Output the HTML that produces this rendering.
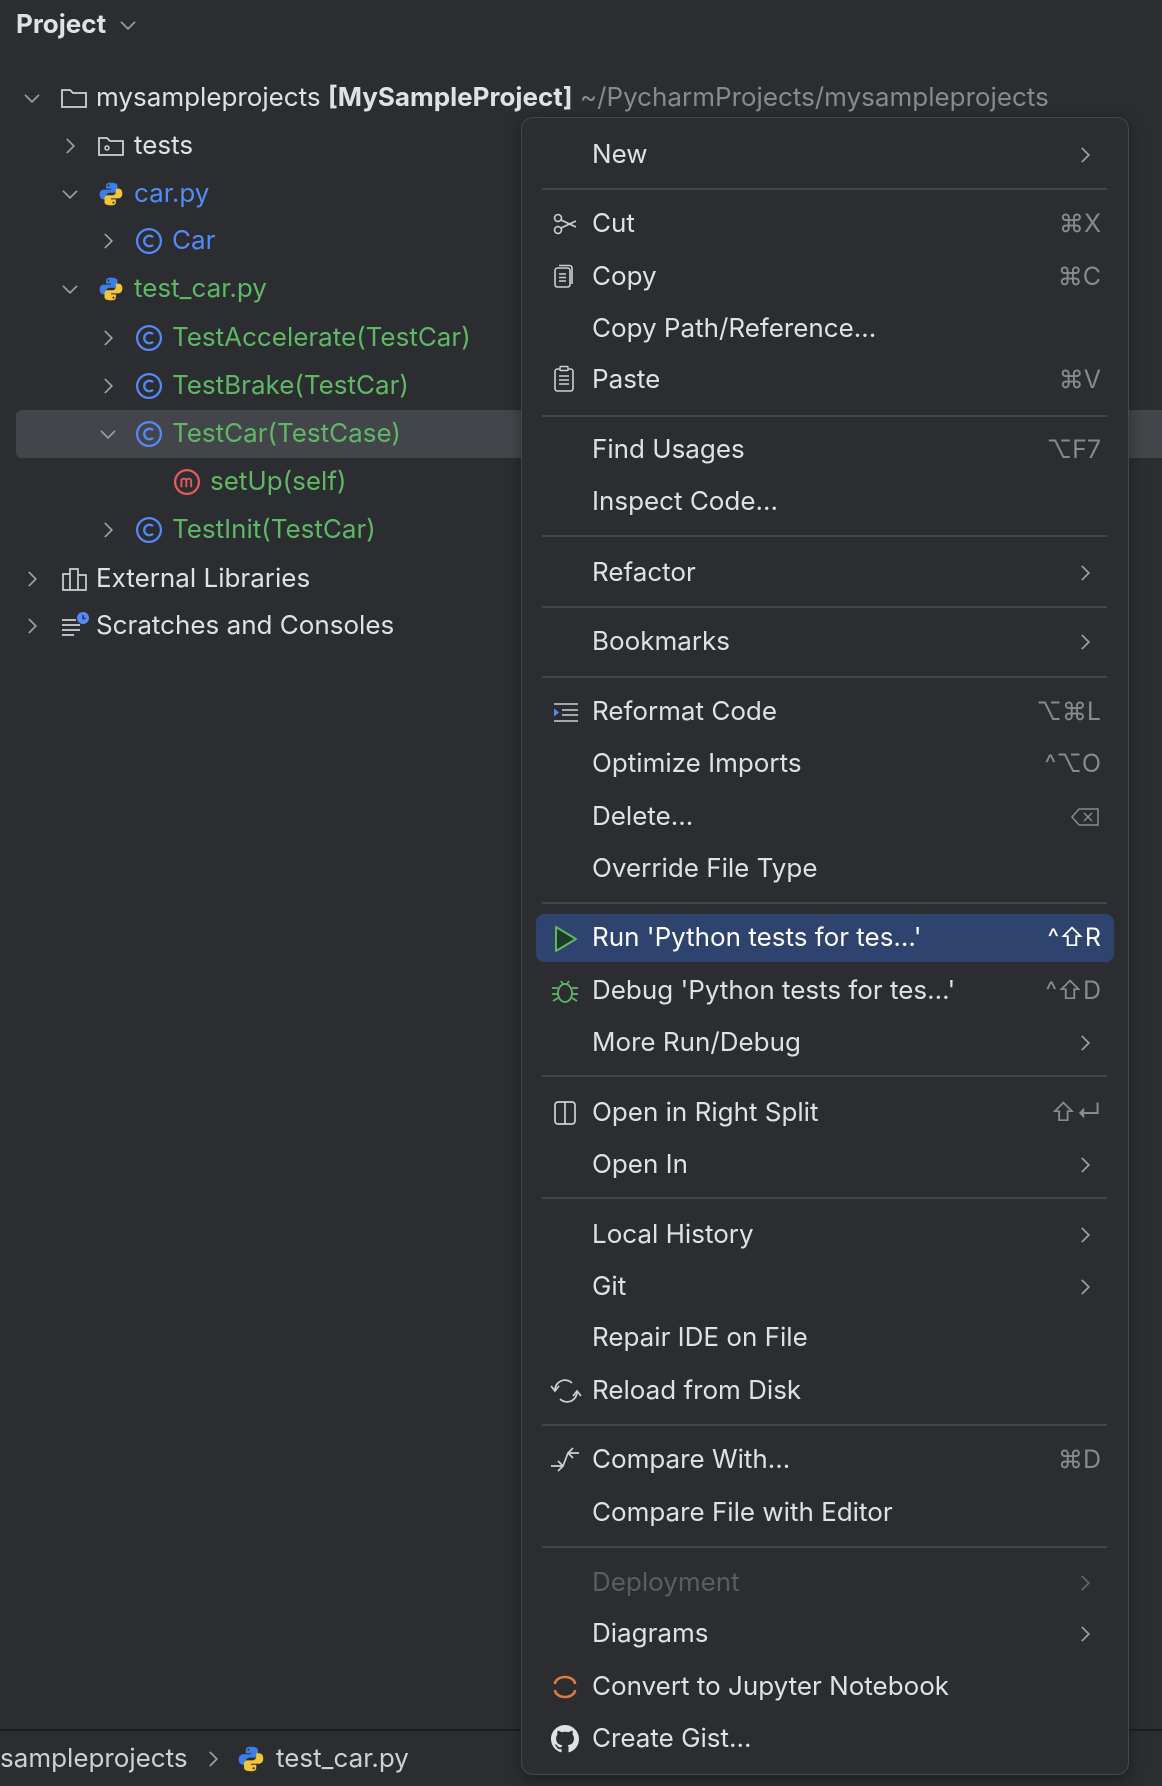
<!DOCTYPE html>
<html><head><meta charset="utf-8">
<style>
*{margin:0;padding:0;box-sizing:border-box}
html,body{width:1162px;height:1786px;background:#2b2d30;overflow:hidden;font-family:"Inter","Liberation Sans",sans-serif;color:#dfe1e5}
.a{position:absolute;white-space:nowrap;height:32px;line-height:32px;font-size:26px}
.ic{position:absolute}
.g{color:#5fb865}.b{color:#548af7}.gr{color:#868a91}
.sep{position:absolute;left:542px;width:565px;height:2px;background:#43454a}
.sc{position:absolute;right:61px;color:#868a91;font-size:25px;height:32px;line-height:32px;text-align:right}
.ch{position:absolute;left:1076px}
</style></head><body>
<svg width="0" height="0" style="position:absolute">
<defs>
<symbol id="cr" viewBox="0 0 14 14"><path d="M4.5 1.5l5.5 5.5-5.5 5.5" fill="none" stroke="#9da0a8" stroke-width="1.3"/></symbol>
<symbol id="cd" viewBox="0 0 14 14"><path d="M1.5 4.5l5.5 5.5 5.5-5.5" fill="none" stroke="#9da0a8" stroke-width="1.3"/></symbol>
<symbol id="cls" viewBox="0 0 16 16"><circle cx="8" cy="8" r="6.8" fill="none" stroke="#548af7" stroke-width="1.3"/><path d="M10.3 5.8A3 3 0 1 0 10.3 10.2" fill="none" stroke="#548af7" stroke-width="1.3"/></symbol>
<symbol id="py" viewBox="0 0 16 16"><path d="M7.8 1C5 1 5 2.3 5 3v1.7h3v.6H3.6C2.2 5.3 1 6.3 1 8.3s1.1 3 2.4 3H5V9.4c0-1.2 1-2.2 2.2-2.2h2.9c1 0 1.9-.8 1.9-1.9V3c0-1-.9-2-4.2-2z" fill="#3d7ee8"/><circle cx="6.5" cy="2.7" r=".6" fill="#2b2d30"/><path d="M8.2 15c2.8 0 2.8-1.3 2.8-2v-1.7H8v-.6h4.4c1.4 0 2.6-1 2.6-3s-1.1-3-2.4-3H11v1.9c0 1.2-1 2.2-2.2 2.2H5.9c-1 0-1.9.8-1.9 1.9V13c0 1 .9 2 4.2 2z" fill="#f2c53d"/><circle cx="9.5" cy="13.3" r=".6" fill="#2b2d30"/></symbol>
</defs></svg>

<!-- Header -->
<div class="a" style="left:16px;top:9px;font-weight:bold;font-size:26px">Project</div>
<svg class="ic" style="left:119px;top:16px" width="18" height="18"><use href="#cd"/></svg>

<!-- selected row -->
<div style="position:absolute;left:16px;top:410px;width:1146px;height:48px;background:#43454a;border-radius:6px 0 0 6px"></div>

<!-- tree -->
<svg class="ic" style="left:23px;top:89px" width="18" height="18"><use href="#cd"/></svg>
<svg class="ic" style="left:60px;top:86px" width="28" height="24" viewBox="0 0 28 24"><path d="M2 4h8l3 3h13v14H2z" fill="none" stroke="#ced0d6" stroke-width="1.8"/></svg>
<div class="a" style="left:96px;top:82px">mysampleprojects <b>[MySampleProject]</b> <span class="gr">~/PycharmProjects/mysampleprojects</span></div>

<svg class="ic" style="left:61px;top:137px" width="18" height="18"><use href="#cr"/></svg>
<svg class="ic" style="left:97px;top:134px" width="28" height="24" viewBox="0 0 28 24"><path d="M2 4h8l3 3h13v14H2z" fill="none" stroke="#ced0d6" stroke-width="1.8"/><circle cx="10" cy="14" r="2" fill="none" stroke="#ced0d6" stroke-width="1.5"/></svg>
<div class="a" style="left:134px;top:130px">tests</div>

<svg class="ic" style="left:61px;top:185px" width="18" height="18"><use href="#cd"/></svg>
<svg class="ic" style="left:98px;top:181px" width="26" height="26"><use href="#py"/></svg>
<div class="a b" style="left:134px;top:178px">car.py</div>

<svg class="ic" style="left:99px;top:232px" width="18" height="18"><use href="#cr"/></svg>
<svg class="ic" style="left:135px;top:227px" width="28" height="28"><use href="#cls"/></svg>
<div class="a b" style="left:172px;top:225px">Car</div>

<svg class="ic" style="left:61px;top:280px" width="18" height="18"><use href="#cd"/></svg>
<svg class="ic" style="left:98px;top:276px" width="26" height="26"><use href="#py"/></svg>
<div class="a g" style="left:134px;top:273px">test_car.py</div>

<svg class="ic" style="left:99px;top:329px" width="18" height="18"><use href="#cr"/></svg>
<svg class="ic" style="left:135px;top:324px" width="28" height="28"><use href="#cls"/></svg>
<div class="a g" style="left:172px;top:322px">TestAccelerate(TestCar)</div>

<svg class="ic" style="left:99px;top:377px" width="18" height="18"><use href="#cr"/></svg>
<svg class="ic" style="left:135px;top:372px" width="28" height="28"><use href="#cls"/></svg>
<div class="a g" style="left:172px;top:370px">TestBrake(TestCar)</div>

<svg class="ic" style="left:99px;top:425px" width="18" height="18"><use href="#cd"/></svg>
<svg class="ic" style="left:135px;top:420px" width="28" height="28"><use href="#cls"/></svg>
<div class="a g" style="left:172px;top:418px">TestCar(TestCase)</div>

<svg class="ic" style="left:173px;top:468px" width="28" height="28" viewBox="0 0 16 16"><circle cx="8" cy="8" r="6.8" fill="none" stroke="#e55a5a" stroke-width="1.3"/><path d="M4.8 11V6.3M4.8 7.5c0-1 .7-1.4 1.4-1.4S7.6 6.5 7.6 7.5V11M7.6 7.5c0-1 .7-1.4 1.4-1.4s1.4.4 1.4 1.4V11" fill="none" stroke="#e55a5a" stroke-width="1.1"/></svg>
<div class="a g" style="left:210px;top:466px">setUp(self)</div>

<svg class="ic" style="left:99px;top:521px" width="18" height="18"><use href="#cr"/></svg>
<svg class="ic" style="left:135px;top:516px" width="28" height="28"><use href="#cls"/></svg>
<div class="a g" style="left:172px;top:514px">TestInit(TestCar)</div>

<svg class="ic" style="left:23px;top:570px" width="18" height="18"><use href="#cr"/></svg>
<svg class="ic" style="left:61px;top:566px" width="28" height="26" viewBox="0 0 28 26"><path d="M2 8h7v16H2zM9 3h8v21H9zM17 9h8v15h-8z" fill="none" stroke="#ced0d6" stroke-width="1.7"/></svg>
<div class="a" style="left:96px;top:563px">External Libraries</div>

<svg class="ic" style="left:23px;top:617px" width="18" height="18"><use href="#cr"/></svg>
<svg class="ic" style="left:60px;top:610px" width="32" height="30" viewBox="0 0 32 30"><path d="M2 10h14M2 15h18M2 20h18M2 25h12" stroke="#ced0d6" stroke-width="1.8"/><circle cx="23" cy="8" r="6" fill="#548af7"/><path d="M23 5v3.5h2.5" stroke="#2b2d30" stroke-width="1.5" fill="none"/></svg>
<div class="a" style="left:96px;top:610px">Scratches and Consoles</div>

<!-- status bar -->
<div style="position:absolute;left:0;top:1729px;width:1162px;height:2px;background:#1e1f22"></div>
<div class="a" style="left:0;top:1743px;color:#ced0d6">sampleprojects</div>
<svg class="ic" style="left:204px;top:1750px" width="18" height="18"><use href="#cr"/></svg>
<svg class="ic" style="left:237px;top:1745px" width="28" height="28"><use href="#py"/></svg>
<div class="a" style="left:276px;top:1743px;color:#ced0d6">test_car.py</div>

<!-- menu -->
<div style="position:absolute;left:521px;top:117px;width:608px;height:1658px;background:#2b2d30;border:1.5px solid #45474c;border-radius:12px;box-shadow:0 4px 14px rgba(0,0,0,.35)"></div>
<div style="position:absolute;left:536px;top:914px;width:578px;height:48px;background:#2e436e;border-radius:8px"></div>

<div class="sep" style="top:188px"></div>
<div class="sep" style="top:415px"></div>
<div class="sep" style="top:535px"></div>
<div class="sep" style="top:606px"></div>
<div class="sep" style="top:676px"></div>
<div class="sep" style="top:902px"></div>
<div class="sep" style="top:1075px"></div>
<div class="sep" style="top:1197px"></div>
<div class="sep" style="top:1424px"></div>
<div class="sep" style="top:1546px"></div>

<div class="a" style="left:592px;top:139px">New</div><svg class="ic ch" style="top:146px" width="18" height="18"><use href="#cr"/></svg>

<svg class="ic" style="left:552px;top:212px" width="26" height="24" viewBox="0 0 26 24"><circle cx="6" cy="6" r="3.5" fill="none" stroke="#ced0d6" stroke-width="1.6"/><circle cx="6" cy="18" r="3.5" fill="none" stroke="#ced0d6" stroke-width="1.6"/><path d="M9 8l15 7M9 16l15-7" stroke="#ced0d6" stroke-width="1.6"/></svg>
<div class="a" style="left:592px;top:208px">Cut</div><div class="sc" style="top:208px">⌘X</div>

<svg class="ic" style="left:553px;top:263px" width="24" height="26" viewBox="0 0 24 26"><rect x="2" y="5" width="15" height="19" rx="2.5" fill="none" stroke="#ced0d6" stroke-width="1.6"/><path d="M6 2.5h10.5A2.5 2.5 0 0 1 19 5v16" fill="none" stroke="#ced0d6" stroke-width="1.6"/><path d="M6 11h7M6 14.5h7M6 18h7" stroke="#ced0d6" stroke-width="1.5"/></svg>
<div class="a" style="left:592px;top:261px">Copy</div><div class="sc" style="top:261px">⌘C</div>

<div class="a" style="left:592px;top:313px">Copy Path/Reference...</div>

<svg class="ic" style="left:553px;top:365px" width="24" height="28" viewBox="0 0 24 28"><rect x="2" y="4" width="18" height="22" rx="2.5" fill="none" stroke="#ced0d6" stroke-width="1.6"/><rect x="7" y="1.5" width="8" height="4" rx="1" fill="#2b2d30" stroke="#ced0d6" stroke-width="1.5"/><path d="M6 11h10M6 15h10M6 19h10" stroke="#ced0d6" stroke-width="1.5"/></svg>
<div class="a" style="left:592px;top:364px">Paste</div><div class="sc" style="top:364px">⌘V</div>

<div class="a" style="left:592px;top:434px">Find Usages</div><div class="sc" style="top:434px">⌥F7</div>
<div class="a" style="left:592px;top:486px">Inspect Code...</div>
<div class="a" style="left:592px;top:557px">Refactor</div><svg class="ic ch" style="top:564px" width="18" height="18"><use href="#cr"/></svg>
<div class="a" style="left:592px;top:626px">Bookmarks</div><svg class="ic ch" style="top:633px" width="18" height="18"><use href="#cr"/></svg>

<svg class="ic" style="left:553px;top:701px" width="26" height="22" viewBox="0 0 26 22"><path d="M1 3h24M9 9h16M9 14h16M1 20h24" stroke="#ced0d6" stroke-width="1.6"/><path d="M1 7.5l5 4-5 4z" fill="#548af7"/></svg>
<div class="a" style="left:592px;top:696px">Reformat Code</div><div class="sc" style="top:696px">⌥⌘L</div>
<div class="a" style="left:592px;top:748px">Optimize Imports</div><div class="sc" style="top:748px">^⌥O</div>
<div class="a" style="left:592px;top:801px">Delete...</div>
<svg class="ic" style="left:1071px;top:807px" width="30" height="20" viewBox="0 0 30 20"><path d="M8 2h19v16H8L1 10z" fill="none" stroke="#868a91" stroke-width="1.5"/><path d="M13 6l8 8M21 6l-8 8" stroke="#868a91" stroke-width="1.5"/></svg>
<div class="a" style="left:592px;top:853px">Override File Type</div>

<svg class="ic" style="left:553px;top:925px" width="26" height="28" viewBox="0 0 26 28"><path d="M3 2l20 12L3 26z" fill="#1f3a26" stroke="#5fb865" stroke-width="2" stroke-linejoin="round"/></svg>
<div class="a" style="left:592px;top:922px;color:#fff">Run 'Python tests for tes...'</div><div class="sc" style="top:922px;color:#fff">^⇧R</div>

<svg class="ic" style="left:550px;top:976px" width="30" height="30" viewBox="0 0 30 30"><ellipse cx="15" cy="17" rx="7" ry="9" fill="none" stroke="#5fb865" stroke-width="1.8"/><path d="M11 5l2 3M19 5l-2 3M2 12h6M22 12h6M2 18h6M22 18h6M3 25l5-3M27 25l-5-3" stroke="#5fb865" stroke-width="1.8"/></svg>
<div class="a" style="left:592px;top:975px">Debug 'Python tests for tes...'</div><div class="sc" style="top:975px">^⇧D</div>

<div class="a" style="left:592px;top:1027px">More Run/Debug</div><svg class="ic ch" style="top:1034px" width="18" height="18"><use href="#cr"/></svg>

<svg class="ic" style="left:553px;top:1100px" width="24" height="26" viewBox="0 0 24 26"><rect x="2" y="2" width="20" height="22" rx="3" fill="none" stroke="#ced0d6" stroke-width="1.7"/><path d="M12 2v22" stroke="#ced0d6" stroke-width="1.7"/></svg>
<div class="a" style="left:592px;top:1097px">Open in Right Split</div><div class="sc" style="top:1097px">⇧↵</div>
<div class="a" style="left:592px;top:1149px">Open In</div><svg class="ic ch" style="top:1156px" width="18" height="18"><use href="#cr"/></svg>

<div class="a" style="left:592px;top:1219px">Local History</div><svg class="ic ch" style="top:1226px" width="18" height="18"><use href="#cr"/></svg>
<div class="a" style="left:592px;top:1271px">Git</div><svg class="ic ch" style="top:1278px" width="18" height="18"><use href="#cr"/></svg>
<div class="a" style="left:592px;top:1322px">Repair IDE on File</div>

<svg class="ic" style="left:550px;top:1377px" width="32" height="28" viewBox="0 0 32 28"><path d="M5 13A10 10 0 0 1 22 6M27 15A10 10 0 0 1 10 22" fill="none" stroke="#ced0d6" stroke-width="1.7"/><path d="M1 9l4 5 4-5M31 19l-4-5-4 5" fill="none" stroke="#ced0d6" stroke-width="1.7"/></svg>
<div class="a" style="left:592px;top:1375px">Reload from Disk</div>

<svg class="ic" style="left:549px;top:1444px" width="34" height="32" viewBox="0 0 34 32"><path d="M30 9H20M24 4l-5 5 5 5M2 22h12M9 17l5 5-5 5M19 9l-5 13" fill="none" stroke="#ced0d6" stroke-width="1.7"/></svg>
<div class="a" style="left:592px;top:1444px">Compare With...</div><div class="sc" style="top:1444px">⌘D</div>
<div class="a" style="left:592px;top:1497px">Compare File with Editor</div>

<div class="a" style="left:592px;top:1567px;color:#5a5d63">Deployment</div><svg class="ic ch" style="top:1574px;opacity:.5" width="18" height="18"><use href="#cr"/></svg>
<div class="a" style="left:592px;top:1618px">Diagrams</div><svg class="ic ch" style="top:1625px" width="18" height="18"><use href="#cr"/></svg>

<svg class="ic" style="left:551px;top:1673px" width="28" height="28" viewBox="0 0 28 28"><path d="M4 11A10 7 0 0 1 24 11" fill="none" stroke="#e07a3f" stroke-width="2.6"/><path d="M4 17A10 7 0 0 0 24 17" fill="none" stroke="#e07a3f" stroke-width="2.6"/></svg>
<div class="a" style="left:592px;top:1671px">Convert to Jupyter Notebook</div>

<svg class="ic" style="left:551px;top:1725px" width="28" height="28" viewBox="0 0 16 16"><path fill="#dfe1e5" d="M8 0C3.58 0 0 3.58 0 8c0 3.540 2.29 6.53 5.47 7.59.4.07.55-.17.55-.38 0-.19-.01-.82-.01-1.49-2.01.37-2.530-.49-2.69-.94-.09-.23-.48-.94-.82-1.13-.28-.15-.68-.52-.01-.53.63-.01 1.08.58 1.23.82.72 1.21 1.87.87 2.33.66.07-.52.28-.87.51-1.07-1.78-.2-3.64-.89-3.64-3.95 0-.87.31-1.59.82-2.15-.08-.2-.36-1.02.08-2.12 0 0 .67-.21 2.2.82.64-.18 1.32-.27 2-.27s1.36.09 2 .27c1.53-1.04 2.2-.82 2.2-.82.44 1.1.16 1.92.08 2.12.51.56.82 1.27.82 2.15 0 3.07-1.87 3.75-3.65 3.950.29.25.54.73.54 1.48 0 1.07-.01 1.93-.01 2.2 0 .21.15.46.55.38A8.013 8.013 0 0 0 16 8c0-4.42-3.58-8-8-8z"/></svg>
<div class="a" style="left:592px;top:1723px">Create Gist...</div>
</body></html>
